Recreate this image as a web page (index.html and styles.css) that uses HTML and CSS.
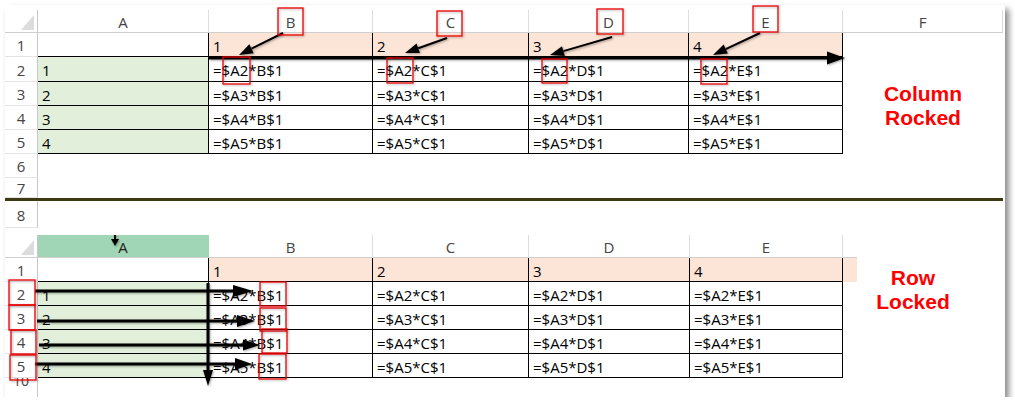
FILE: index.html
```html
<!DOCTYPE html>
<html lang="en">
<head>
    <meta charset="UTF-8">
    <title>Mixed references</title>
    <link rel="stylesheet" href="styles.css">
</head>
<body>
    <div class="sheet">
        <!-- column locked part -->
        <div class="grid grid-top">
            <div class="hd corner"></div>
            <div class="hd">A</div>
            <div class="hd">B</div>
            <div class="hd">C</div>
            <div class="hd">D</div>
            <div class="hd">E</div>
            <div class="hd">F</div>

            <div class="rn">1</div>
            <div class="c"></div>
            <div class="c pk">1</div>
            <div class="c pk">2</div>
            <div class="c pk">3</div>
            <div class="c pk">4</div>
            <div></div>

            <div class="note note-top">Column<br>Rocked</div>

            <div class="rn">2</div>
            <div class="c gr">1</div>
            <div class="c">=$A2*B$1</div>
            <div class="c">=$A2*C$1</div>
            <div class="c">=$A2*D$1</div>
            <div class="c">=$A2*E$1</div>

            <div class="rn">3</div>
            <div class="c gr">2</div>
            <div class="c">=$A3*B$1</div>
            <div class="c">=$A3*C$1</div>
            <div class="c">=$A3*D$1</div>
            <div class="c">=$A3*E$1</div>

            <div class="rn">4</div>
            <div class="c gr">3</div>
            <div class="c">=$A4*B$1</div>
            <div class="c">=$A4*C$1</div>
            <div class="c">=$A4*D$1</div>
            <div class="c">=$A4*E$1</div>

            <div class="rn">5</div>
            <div class="c gr">4</div>
            <div class="c">=$A5*B$1</div>
            <div class="c">=$A5*C$1</div>
            <div class="c">=$A5*D$1</div>
            <div class="c">=$A5*E$1</div>

            <div class="rn">6</div>
            <div class="blank"></div>
            <div class="rn">7</div>
            <div class="blank"></div>

            <div class="sep"></div>

            <div class="rn">8</div>
        </div>

        <!-- row locked part -->
        <div class="grid grid-bot">
            <div class="hd corner"></div>
            <div class="hd sel">A</div>
            <div class="hd">B</div>
            <div class="hd">C</div>
            <div class="hd">D</div>
            <div class="hd">E</div>
            <div class="hd-end"></div>

            <div class="pk-ext"></div>
            <div class="note note-bot">Row<br>Locked</div>

            <div class="rn">1</div>
            <div class="c"></div>
            <div class="c pk">1</div>
            <div class="c pk">2</div>
            <div class="c pk">3</div>
            <div class="c pk">4</div>

            <div class="rn">2</div>
            <div class="c gr">1</div>
            <div class="c">=$A2*B$1</div>
            <div class="c">=$A2*C$1</div>
            <div class="c">=$A2*D$1</div>
            <div class="c">=$A2*E$1</div>

            <div class="rn">3</div>
            <div class="c gr">2</div>
            <div class="c">=$A3*B$1</div>
            <div class="c">=$A3*C$1</div>
            <div class="c">=$A3*D$1</div>
            <div class="c">=$A3*E$1</div>

            <div class="rn">4</div>
            <div class="c gr">3</div>
            <div class="c">=$A4*B$1</div>
            <div class="c">=$A4*C$1</div>
            <div class="c">=$A4*D$1</div>
            <div class="c">=$A4*E$1</div>

            <div class="rn">5</div>
            <div class="c gr">4</div>
            <div class="c">=$A5*B$1</div>
            <div class="c">=$A5*C$1</div>
            <div class="c">=$A5*D$1</div>
            <div class="c">=$A5*E$1</div>

            <div class="rn cut"><span>10</span></div>
        </div>
    </div>

    <!-- callouts drawn over the sheet -->
    <svg class="marks" width="1015" height="406" viewBox="0 0 1015 406">
        <g class="arrows">
            <line x1="283" y1="33" x2="251.5" y2="48.7"/>
            <polygon points="239,55 253.7,53.2 249.3,44.2"/>
            <line x1="447" y1="38" x2="418.2" y2="48.3"/>
            <polygon points="405,53 419.9,53 416.5,43.6"/>
            <line x1="612" y1="37" x2="563.4" y2="51.1"/>
            <polygon points="550,55 564.8,55.9 562,46.3"/>
            <line x1="760" y1="33" x2="725.7" y2="49.1"/>
            <polygon points="713,55 727.8,53.6 723.6,44.6"/>

            <line class="thick" x1="209" y1="58" x2="830" y2="58"/>
            <polygon points="845,58 827,51.5 827,64.5"/>

            <line class="thick" x1="35" y1="291" x2="236" y2="291"/>
            <polygon points="253,291 233,285 233,297"/>
            <line class="thick" x1="37" y1="321" x2="239" y2="321"/>
            <polygon points="255,321 237,315 237,327"/>
            <line class="thick" x1="39" y1="345" x2="245" y2="345"/>
            <polygon points="260,345 243,339.5 243,350.5"/>
            <line class="thick" x1="35" y1="364" x2="237" y2="364"/>
            <polygon points="252,364 235,358 235,370"/>

            <line class="thick" x1="208" y1="283" x2="208" y2="372"/>
            <polygon points="208,386 203,370 213,370"/>

            <line x1="115" y1="235" x2="115" y2="240"/>
            <polygon points="115,246 111,239 119,239"/>
        </g>
        <g class="boxes">
            <rect x="278" y="8" width="25" height="27"/>
            <rect x="437" y="11" width="25" height="25"/>
            <rect x="597" y="9" width="26" height="25"/>
            <rect x="753" y="6" width="25" height="26"/>

            <rect x="223" y="57" width="27" height="27"/>
            <rect x="387" y="58" width="26" height="25"/>
            <rect x="542" y="59" width="25" height="24"/>
            <rect x="701" y="59" width="26" height="25"/>

            <rect x="9" y="280" width="26" height="25"/>
            <rect x="9" y="305" width="26" height="25"/>
            <rect x="11" y="330" width="25" height="24"/>
            <rect x="10" y="355" width="26" height="25"/>

            <rect x="260" y="282" width="26" height="24"/>
            <rect x="260" y="308" width="26" height="23"/>
            <rect x="262" y="329" width="25" height="24"/>
            <rect x="259" y="354" width="27" height="25"/>
        </g>
    </svg>
</body>
</html>
```

FILE: styles.css
```css
body {
    margin: 0;
    background-color: #ffffff;
    font-family: "Open Sans", "Liberation Sans", sans-serif;
    position: relative;
}

.sheet {
    margin: 5px 0 0 5px;
    padding-top: 5px;
    width: 1000px;
    height: 387px;
    background-color: #ffffff;
    box-shadow: 4px 4px 6px rgba(0, 0, 0, 0.45);
    overflow: hidden;
}

.grid {
    display: grid;
    font-size: 15px;
    color: #000;
}

.grid-top {
    grid-template-columns: 33px 171px 164px 156px 160px 154px 160px;
    grid-template-rows: 23px 24px 25px 24px 24px 24px 24px 20px 3px 27px;
}

.grid-bot {
    margin-top: 7px;
    grid-template-columns: 33px 171px 164px 156px 161px 153px 140px;
    grid-template-rows: 23px 24px 24px 24px 24px 24px 19px;
}

.grid > div {
    box-sizing: border-box;
}

/* column headers */
.hd {
    display: flex;
    align-items: center;
    justify-content: center;
    color: #444;
    border-right: 1px solid #dcdcdc;
    border-bottom: 1px solid #cfcfcf;
    padding-top: 1px;
}

.hd.sel {
    background-color: #a0d6b6;
    color: #222;
    border-right-color: #a0d6b6;
}

.hd-end {
    border-bottom: 1px solid #cfcfcf;
    margin-right: 126px;
}

.corner {
    position: relative;
    border-right-color: #c8c8c8;
}

.corner::after {
    content: "";
    position: absolute;
    right: 3px;
    bottom: 2px;
    width: 13px;
    height: 15px;
    background-color: #dcdcdc;
    clip-path: polygon(100% 0, 100% 100%, 0 100%);
}

/* row numbers */
.rn {
    grid-column: 1;
    display: flex;
    align-items: center;
    justify-content: center;
    color: #444;
    border-right: 1px solid #c8c8c8;
    border-bottom: 1px solid #e4e4e4;
    padding-top: 1px;
}

.rn.cut {
    overflow: hidden;
    align-items: flex-start;
    border-bottom: none;
}

.rn.cut span {
    margin-top: -8px;
    font-size: 14px;
}

.blank {
    grid-column: 2 / -1;
}

/* data cells */
.c {
    display: flex;
    align-items: center;
    padding: 2px 0 0 4px;
    border-right: 1px solid #000;
    border-bottom: 1px solid #000;
    white-space: nowrap;
}

.pk {
    background-color: #fce4d6;
}

.gr {
    background-color: #e2efda;
}

.pk-ext {
    grid-column: 7;
    grid-row: 2;
    background: linear-gradient(to right, #fce4d6 14px, transparent 14px);
}

.sep {
    grid-column: 1 / -1;
    background-color: #3b3a12;
}

.note {
    grid-column: 7;
    display: flex;
    align-items: center;
    justify-content: center;
    text-align: center;
    font-family: "Liberation Sans", Arial, sans-serif;
    font-weight: bold;
    font-size: 21px;
    line-height: 24px;
    color: #ff0000;
}

.note-top {
    grid-row: 3 / span 4;
}

.note-bot {
    grid-row: 2 / span 3;
    padding-bottom: 8px;
}

/* overlay with callouts */
.marks {
    position: absolute;
    top: 0;
    left: 0;
    pointer-events: none;
}

.arrows {
    filter: drop-shadow(1px 1px 1px rgba(0, 0, 0, 0.35));
}

.arrows line {
    stroke: #000;
    stroke-width: 2;
}

.arrows line.thick {
    stroke-width: 3;
}

.arrows polygon {
    fill: #000;
}

.boxes rect {
    fill: none;
    stroke: #ee0000;
    stroke-width: 1.3;
    filter: drop-shadow(1px 1px 1px rgba(0, 0, 0, 0.3));
}
```
